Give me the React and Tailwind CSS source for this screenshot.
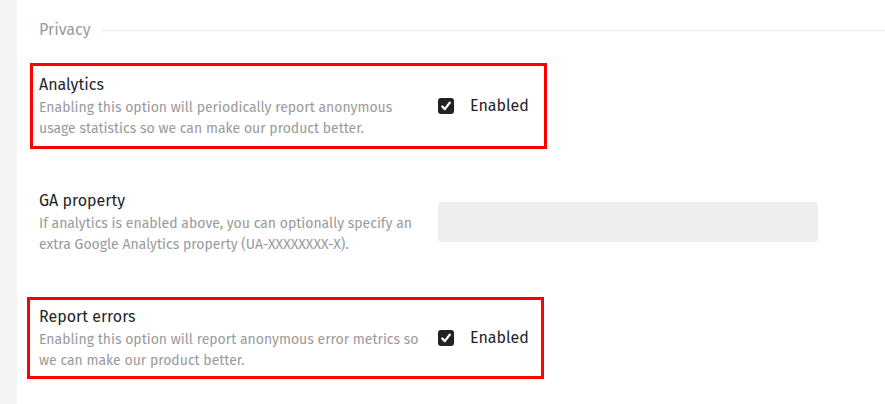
import React from "react";

function Check() {
  return (
    <div className="w-4 h-4 rounded-[3px] bg-[#222] flex items-center justify-center shrink-0">
      <svg width="12" height="12" viewBox="0 0 12 12" fill="none">
        <path d="M2.3 6.5 L4.8 9.1 L9.8 2.6" stroke="#fff" strokeWidth="2.3" strokeLinecap="round" strokeLinejoin="round" />
      </svg>
    </div>
  );
}

function Info({ title, lines }) {
  return (
    <div className="w-[399px] shrink-0">
      <div className="text-[16px] leading-[24px] text-[#1f1f2b]">{title}</div>
      <div className="text-[14px] leading-[21px] text-[#9a9a9a] whitespace-nowrap">
        {lines[0]}
        <br />
        {lines[1]}
      </div>
    </div>
  );
}

function Enabled() {
  return (
    <div className="flex items-center gap-4">
      <Check />
      <span className="text-[16px] leading-[24px] text-[#1f1f2b]">Enabled</span>
    </div>
  );
}

export default function App() {
  return (
    <div
      className="flex w-[885px] h-[404px] overflow-hidden bg-white"
      style={{ fontFamily: '"Fira Sans", Roboto, "Noto Sans", sans-serif' }}
    >
      <div className="w-[17px] shrink-0 bg-[#f4f4f4]" />
      <div className="flex-1 flex flex-col">
        <div className="mt-[18px] flex items-center h-6 pl-[22px]">
          <span className="text-[16px] leading-[24px] text-[#9a9a9a]">Privacy</span>
          <div className="flex-1 ml-[11px] h-px bg-[#ebebeb]" />
        </div>

        <div className="mt-[21px] ml-[13px] w-[517px] border-[3px] border-[#ff0000] pt-[7px] pb-[7px] pl-[6px] flex items-center">
          <Info
            title="Analytics"
            lines={[
              "Enabling this option will periodically report anonymous",
              "usage statistics so we can make our product better.",
            ]}
          />
          <Enabled />
        </div>

        <div className="mt-[40px] ml-[22px] flex items-center">
          <Info
            title="GA property"
            lines={[
              "If analytics is enabled above, you can optionally specify an",
              "extra Google Analytics property (UA-XXXXXXXX-X).",
            ]}
          />
          <div className="w-[380px] h-10 rounded-[4px] bg-[#eeeeee]" />
        </div>

        <div className="mt-[42px] ml-[10px] w-[517px] border-[3px] border-[#ff0000] pt-[5px] pb-[5px] pl-[9px] flex items-center">
          <Info
            title="Report errors"
            lines={[
              "Enabling this option will report anonymous error metrics so",
              "we can make our product better.",
            ]}
          />
          <Enabled />
        </div>
      </div>
    </div>
  );
}
